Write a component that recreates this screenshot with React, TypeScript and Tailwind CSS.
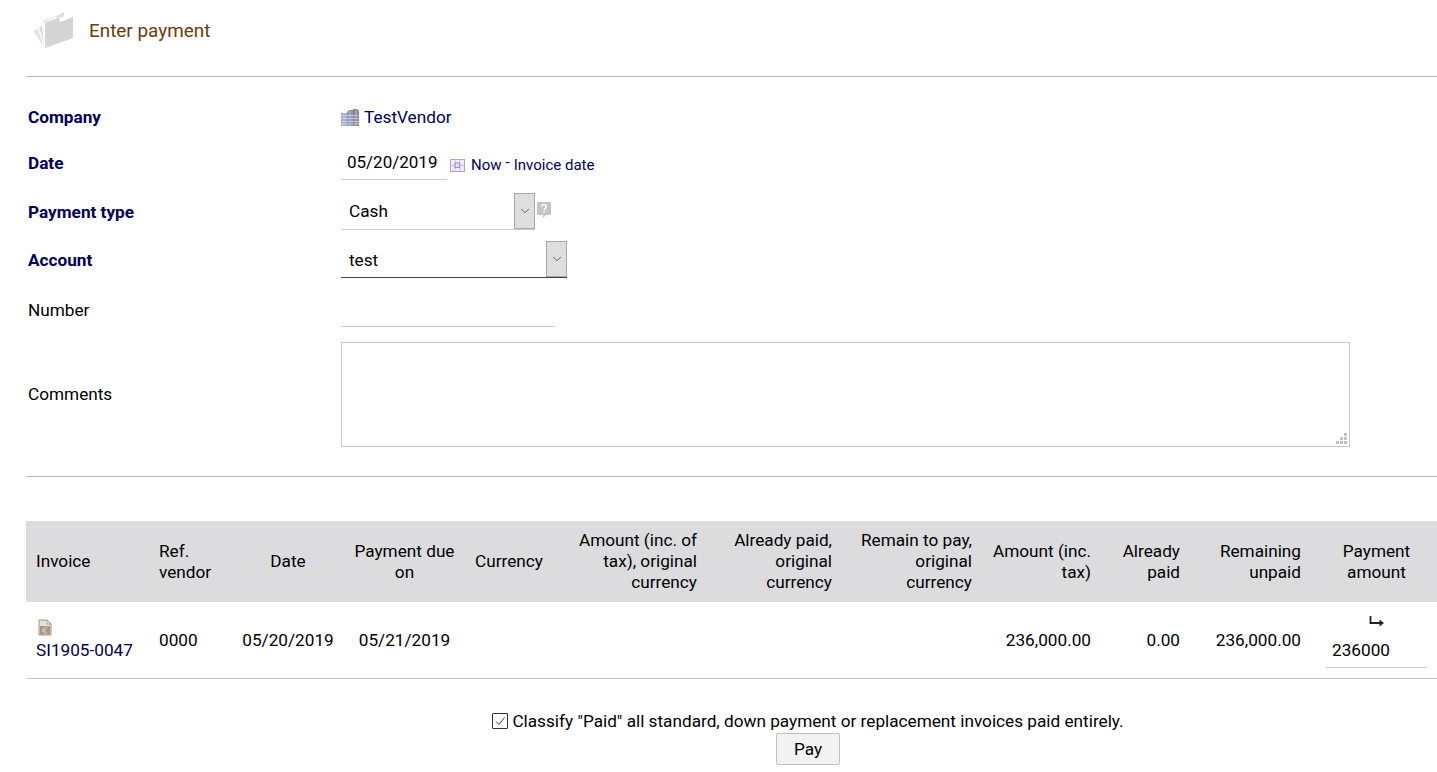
import { ChevronDown } from "lucide-react";
import type { ReactNode } from "react";

const rowLabel = "w-[315px] shrink-0 pl-[2px]";
const required = "font-bold text-[#000060]";

const columns = [
  { label: "Invoice", width: "w-[123px]", align: "text-left", pad: "px-[10px]" },
  { label: "Ref. vendor", width: "w-[83px]", align: "text-left", pad: "px-[10px]" },
  { label: "Date", width: "w-[112px]", align: "text-center", pad: "px-[10px]" },
  { label: "Payment due on", width: "w-[121px]", align: "text-center", pad: "px-[10px]" },
  { label: "Currency", width: "w-[103px]", align: "text-left", pad: "px-[10px]" },
  { label: "Amount (inc. of tax), original currency", width: "w-[139px]", align: "text-right", pad: "px-[10px]" },
  { label: "Already paid, original currency", width: "w-[135px]", align: "text-right", pad: "px-[10px]" },
  { label: "Remain to pay, original currency", width: "w-[140px]", align: "text-right", pad: "px-[10px]" },
  { label: "Amount (inc. tax)", width: "w-[119px]", align: "text-right", pad: "px-[10px]" },
  { label: "Already paid", width: "w-[89px]", align: "text-right", pad: "px-[10px]" },
  { label: "Remaining unpaid", width: "w-[121px]", align: "text-right", pad: "px-[10px]" },
  { label: "Payment amount", width: "w-[126px]", align: "text-center", pad: "pl-[15px] pr-[10px]" },
];

function FolderIcon() {
  return (
    <svg width="42" height="38" viewBox="0 0 42 38" className="shrink-0">
      <path d="M0 19 L5 17 L11 35 Z" fill="#e2e2e2" />
      <path d="M6 15 L9 13.500 L11 31 Z" fill="#dcdcdc" />
      <path d="M10 11 L31 0 V4.500 L24 7 L23 4 L10 9 Z" fill="#e0e0e0" />
      <path d="M12 10.500 L25.500 6 L27.500 10 L40 5 V26 L12 36 Z" fill="#d4d4d4" />
    </svg>
  );
}

function VendorIcon() {
  return (
    <svg width="18" height="17" viewBox="0 0 18 17" className="shrink-0">
      <rect x="0" y="4" width="6" height="13" fill="#a4a8cc" />
      <path d="M6 3 L8 1 H12 V17 H6 Z" fill="#8f93bd" />
      <path d="M12 0 H16 L18 2 V17 H12 Z" fill="#8b8498" />
      <path d="M0 6.500h18M0 9.500h18M0 12.500h18M0 15h18" stroke="#d4d7ea" strokeWidth="0.8" />
      <path d="M3 4v13M9 2v15M15 1v16" stroke="#c8cbe2" strokeWidth="0.8" />
    </svg>
  );
}

function CalendarIcon() {
  return (
    <svg width="15" height="13" viewBox="0 0 15 13" className="shrink-0">
      <rect x="0.5" y="0.5" width="14" height="12" fill="#eeecf6" stroke="#aaa4d4" />
      <path d="M0.5 6.500h14M5 0.500v12M10 0.500v12" stroke="#c8c4e0" />
      <rect x="5" y="4" width="4.500" height="4.500" fill="#ecdcf0" stroke="#a878c0" strokeWidth="0.9" />
    </svg>
  );
}

function HelpIcon() {
  return (
    <svg width="14" height="17" viewBox="0 0 14 17" className="shrink-0">
      <path d="M1 0h12a1 1 0 0 1 1 1v11a1 1 0 0 1-1 1H9l-3 3v-3H1a1 1 0 0 1-1-1V1a1 1 0 0 1 1-1z" fill="#c4c4c4" />
      <path d="M4.700 4.800c0-1.400 1-2.100 2.300-2.100s2.300.7 2.300 2c0 1.700-2.100 1.700-2.100 3.400" fill="none" stroke="#fff" strokeWidth="1.500" />
      <rect x="6.300" y="9" width="1.600" height="1.600" fill="#fff" />
    </svg>
  );
}

function BillIcon() {
  return (
    <svg width="14" height="17" viewBox="0 0 14 17">
      <path d="M1 1h8l4 4v11H1z" fill="#e6e1d8" stroke="#8c8274" strokeWidth="0.8" />
      <path d="M9 1v4h4z" fill="#f6f4ef" stroke="#8c8274" strokeWidth="0.6" />
      <rect x="2" y="7" width="10" height="8.500" fill="#a89680" />
      <path d="M9.500 8.800a3 3 0 1 0 0 5M4 10.500h4M4 12.200h4" fill="none" stroke="#d8cfc0" strokeWidth="0.9" />
    </svg>
  );
}

function ArrowIcon() {
  return (
    <svg width="16" height="11" viewBox="0 0 16 11">
      <path d="M1.500 0v7H11" fill="none" stroke="#222" strokeWidth="1.800" />
      <path d="M10.500 3.500L15 7l-4.500 3.500z" fill="#222" />
    </svg>
  );
}

function FormRow({ height, label, labelClass, children }: { height: string; label: string; labelClass?: string; children: ReactNode }) {
  return (
    <div className={`flex items-center ${height}`}>
      <div className={`${rowLabel} ${labelClass ?? ""}`}>{label}</div>
      {children}
    </div>
  );
}

function SelectBox({ value, width, border, textPad }: { value: string; width: string; border: string; textPad: string }) {
  return (
    <div className={`flex items-end h-[36px] ${width} border-b ${border}`}>
      <span className={`flex-1 pl-2 ${textPad}`}>{value}</span>
      <span className="flex items-center justify-center w-[21px] h-[36px] bg-[#dedede] border border-[#a9a9a9]">
        <ChevronDown size={14} strokeWidth={1.25} className="text-[#333]" />
      </span>
    </div>
  );
}

export default function App() {
  return (
    <div className="min-h-[772px] bg-white pl-[26px] font-['Roboto',sans-serif] text-[17.2px] leading-[20.5px] text-black overflow-hidden">
      {/* Title */}
      <div className="flex items-center h-[76px] border-b border-[#bbbbbb] box-content">
        <div className="pl-[7px] pr-[14px] pb-[14px] flex items-center">
          <FolderIcon />
        </div>
        <h1 className="text-[18.9px] text-[#6b3a0f] pb-[13px]">Enter payment</h1>
      </div>

      {/* Form */}
      <div className="pt-[17px] h-[400px] border-b border-[#bbbbbb]">
        <FormRow height="h-[46px]" label="Company" labelClass={required}>
          <div className="flex items-center gap-[5px] text-[#000060]">
            <VendorIcon />
            <span>TestVendor</span>
          </div>
        </FormRow>
        <FormRow height="h-[46px]" label="Date" labelClass={required}>
          <div className="h-[34px] w-[106px] border-b border-[#cccccc] pl-[6px] pt-[6px] text-[17px]">05/20/2019</div>
          <div className="flex items-center ml-[3px] text-[15px] text-[#000060] pt-[4px]">
            <CalendarIcon />
            <span className="ml-[6px]">Now</span>
            <span className="mx-[4px] relative -top-[3px]">-</span>
            <span>Invoice date</span>
          </div>
        </FormRow>
        <FormRow height="h-[52px]" label="Payment type" labelClass={required}>
          <SelectBox value="Cash" width="w-[194px]" border="border-[#cccccc]" textPad="pb-[8px]" />
          <div className="ml-[2px] mb-[4px]">
            <HelpIcon />
          </div>
        </FormRow>
        <FormRow height="h-[44px]" label="Account" labelClass={required}>
          <SelectBox value="test" width="w-[226px]" border="border-[#444444]" textPad="pb-[7px]" />
        </FormRow>
        <FormRow height="h-[56px]" label="Number">
          <div className="h-[34px] w-[214px] border-b border-[#cccccc]" />
        </FormRow>
        <FormRow height="h-[113px]" label="Comments">
          <div className="relative h-[105px] w-[1009px] border border-[#c8c8c8]">
            <svg width="12" height="12" viewBox="0 0 12 12" className="absolute right-[1px] bottom-[1px]">
              <path d="M8 0h3v3H8zM4 4h3v3H4zM8 4h3v3H8zM0 8h3v3H0zM4 8h3v3H4zM8 8h3v3H8z" fill="#c0c0c0" />
            </svg>
          </div>
        </FormRow>
      </div>

      {/* Payments table */}
      <table className="mt-[44px] w-[1411px] table-fixed border-collapse">
        <thead>
          <tr className="h-[81px] bg-[#dcdcdf] leading-[21px]">
            {columns.map((col) => (
              <th key={col.label} className={`${col.width} ${col.align} ${col.pad} font-normal`}>
                {col.label}
              </th>
            ))}
          </tr>
        </thead>
        <tbody>
          <tr className="h-[76px] border-b border-[#c4c4c4]">
            <td className="px-[10px] text-[#000050] align-top pt-[17px]">
              <div className="pl-[2px] pb-[4px]">
                <BillIcon />
              </div>
              SI1905-0047
            </td>
            <td className="px-[10px]">0000</td>
            <td className="px-[10px] text-center">05/20/2019</td>
            <td className="px-[10px] text-center">05/21/2019</td>
            <td />
            <td />
            <td />
            <td />
            <td className="px-[10px] text-right">236,000.00</td>
            <td className="px-[10px] text-right">0.00</td>
            <td className="px-[10px] text-right">236,000.00</td>
            <td className="pl-[15px] pr-[10px] align-top">
              <div className="flex justify-center pt-[14px]">
                <ArrowIcon />
              </div>
              <div className="h-[41px] border-b border-[#cccccc] pl-[6px] pt-[13px]">236000</div>
            </td>
          </tr>
        </tbody>
      </table>

      {/* Submit */}
      <div className="flex flex-col items-center pt-[32px] pl-[153px]">
        <label className="flex items-center gap-[4px]">
          <span className="flex items-center justify-center w-4 h-4 border border-[#333] rounded-[1px]">
            <svg width="12" height="12" viewBox="0 0 12 12">
              <path d="M2 6.500L5 9.500L10.500 2.500" fill="none" stroke="#444" strokeWidth="1" />
            </svg>
          </span>
          Classify "Paid" all standard, down payment or replacement invoices paid entirely.
        </label>
        <button className="mt-[2px] h-[32px] w-[64px] rounded-[2px] border border-[#c0c0c0] bg-[#f2f2f2]">Pay</button>
      </div>
    </div>
  );
}
